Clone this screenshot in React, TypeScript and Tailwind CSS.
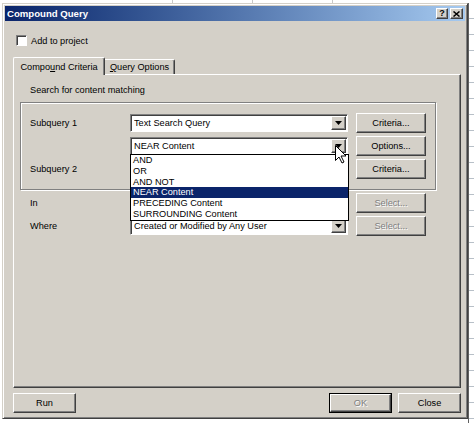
const raised =
  'border border-t-white border-l-white border-r-[#404040] border-b-[#404040] shadow-[inset_-1px_-1px_#808080] bg-[#d4d0c8]'
const sunken = 'border border-t-[#808080] border-l-[#808080] border-r-white border-b-white'
const disabledText = 'text-[#808080] [text-shadow:1px_1px_0_#ffffff]'

function Arrow() {
  return (
    <svg width="7" height="4" viewBox="0 0 7 4">
      <path d="M0 0h7L3.5 4z" fill="#000" />
    </svg>
  )
}

function Combo({ text }: { text: string }) {
  return (
    <div className={`w-[218px] h-[18px] ${sunken}`}>
      <div className="h-full flex items-center bg-white shadow-[inset_1px_1px_#404040] pl-[3px] pr-[1px]">
        <span className="flex-1 whitespace-nowrap overflow-hidden">{text}</span>
        <div className={`w-[15px] h-[14px] ${raised} flex items-center justify-center`}>
          <Arrow />
        </div>
      </div>
    </div>
  )
}

function Btn({ label, disabled = false }: { label: string; disabled?: boolean }) {
  return (
    <div className={`w-[70px] h-[20px] ${raised} flex items-center justify-center ml-[8px]`}>
      <span className={disabled ? disabledText : ''}>{label}</span>
    </div>
  )
}

// combos that sit under the open list get no text: the list covers them
function Row({ label, combo, button, disabled }: { label: string; combo: string; button: string; disabled?: boolean }) {
  return (
    <div className="flex items-center h-[20px]">
      <div className="w-[100px]">{label}</div>
      <Combo text={combo} />
      <Btn label={button} disabled={disabled} />
    </div>
  )
}

const items = ['AND', 'OR', 'AND NOT', 'NEAR Content', 'PRECEDING Content', 'SURROUNDING Content']

export default function App() {
  return (
    <div
      className="relative w-[474px] h-[424px] bg-white overflow-hidden text-[9.2px] leading-[12px] text-black"
      style={{ fontFamily: '"Liberation Sans", Arial, sans-serif' }}
    >
      <div className="flex h-[3px]">
        <div className="w-[173px] border-r border-[#c8c8c8]" />
        <div className="w-[80px] border-r border-[#c8c8c8]" />
        <div className="w-[80px] border-r border-[#c8c8c8]" />
      </div>

      <div className="flex">
        <div className="ml-[2px] w-[466px] h-[416px] border border-t-[#d4d0c8] border-l-[#d4d0c8] border-r-[#404040] border-b-[#404040] shadow-[inset_1px_1px_white,inset_-1px_-1px_#808080] bg-[#d4d0c8] p-[2px] flex flex-col">
          {/* title bar */}
          <div className="h-[15px] flex items-center bg-gradient-to-r from-[#0a246a] to-[#a6caf0] pl-[2px] pr-[2px]">
            <span className="flex-1 text-white font-bold text-[9.6px]">Compound Query</span>
            <div className={`w-[12px] h-[11px] ${raised} flex items-center justify-center font-bold text-[9px] leading-[9px]`}>?</div>
            <div className={`w-[13px] h-[11px] ${raised} flex items-center justify-center ml-[2px]`}>
              <svg width="7" height="6" viewBox="0 0 7 6">
                <path d="M0.5 0.5l6 5M6.5 0.5l-6 5" stroke="#000" strokeWidth="1.5" />
              </svg>
            </div>
          </div>

          {/* checkbox */}
          <div className="flex items-center mt-[14px] ml-[11px] h-[11px]">
            <div className={`w-[11px] h-[11px] ${sunken}`}>
              <div className="w-full h-full bg-white shadow-[inset_1px_1px_#404040]" />
            </div>
            <span className="ml-[4px]">Add to project</span>
          </div>

          {/* tabs */}
          <div className="flex items-end h-[17px] mt-[11px] ml-[8px] relative z-10">
            <div className="w-[92px] h-[18px] mb-[-1px] border-t border-l border-r border-t-white border-l-white border-r-[#404040] shadow-[inset_-1px_0_#808080] bg-[#d4d0c8] rounded-t-[2px] flex items-center justify-center">
              Compo<span className="underline">u</span>nd Criteria
            </div>
            <div className="w-[70px] h-[15px] border-t border-r border-t-white border-r-[#404040] shadow-[inset_-1px_0_#808080] bg-[#d4d0c8] rounded-tr-[2px] flex items-center justify-center">
              <span className="underline">Q</span>uery Options
            </div>
          </div>

          {/* panel */}
          <div className={`ml-[8px] w-[448px] h-[314px] ${raised}`}>
            <div className="ml-[16px] mt-[9px] leading-[12px]">Search for content matching</div>
            <div className="ml-[6px] mt-[6px] w-[416px] h-[88px] border border-[#808080] shadow-[1px_1px_white,inset_1px_1px_white] pt-[10px] pl-[9px] flex flex-col gap-[3px]">
              <Row label="Subquery 1" combo="Text Search Query" button="Criteria..." />
              <div className="flex items-center h-[20px]">
                <div className="w-[100px]" />
                <Combo text="NEAR Content" />
                <Btn label="Options..." />
              </div>
              <Row label="Subquery 2" combo="" button="Criteria..." />
            </div>
            <div className="pl-[16px] mt-[3px] flex flex-col gap-[3px]">
              <Row label="In" combo="" button="Select..." disabled />
              <Row label="Where" combo="Created or Modified by Any User" button="Select..." disabled />
            </div>
          </div>

          {/* bottom buttons */}
          <div className="ml-[8px] w-[448px] mt-[5px] flex justify-between">
            <div className={`w-[63px] h-[20px] ${raised} flex items-center justify-center`}>Run</div>
            <div className="flex gap-[6px]">
              <div className="w-[63px] h-[20px] border border-black">
                <div className={`w-full h-full ${raised} flex items-center justify-center`}>
                  <span className={disabledText}>OK</span>
                </div>
              </div>
              <div className={`w-[63px] h-[20px] ${raised} flex items-center justify-center`}>Close</div>
            </div>
          </div>
        </div>
        <div className="w-[6px] h-[420px] border-l border-[#606060] bg-[repeating-linear-gradient(to_bottom,transparent_0,transparent_15px,#b8c0c8_15px,#b8c0c8_16px)]" />
      </div>

      {/* open dropdown list */}
      <div className="absolute left-[130px] top-[154px] w-[219px] bg-white border border-black">
        {items.map((t) => (
          <div
            key={t}
            className={`h-[10.75px] leading-[10.75px] pl-[2px] whitespace-nowrap ${t === 'NEAR Content' ? 'bg-[#0a246a] text-white' : ''}`}
          >
            {t}
          </div>
        ))}
      </div>

      {/* mouse pointer */}
      <svg className="absolute left-[335px] top-[145px]" width="12" height="19" viewBox="0 0 12 19">
        <path d="M0.5 0.5v15l3.5-3.5 3 6 2-1-3-6h5z" fill="#fff" stroke="#000" strokeWidth="1" strokeLinejoin="miter" />
      </svg>
    </div>
  )
}
